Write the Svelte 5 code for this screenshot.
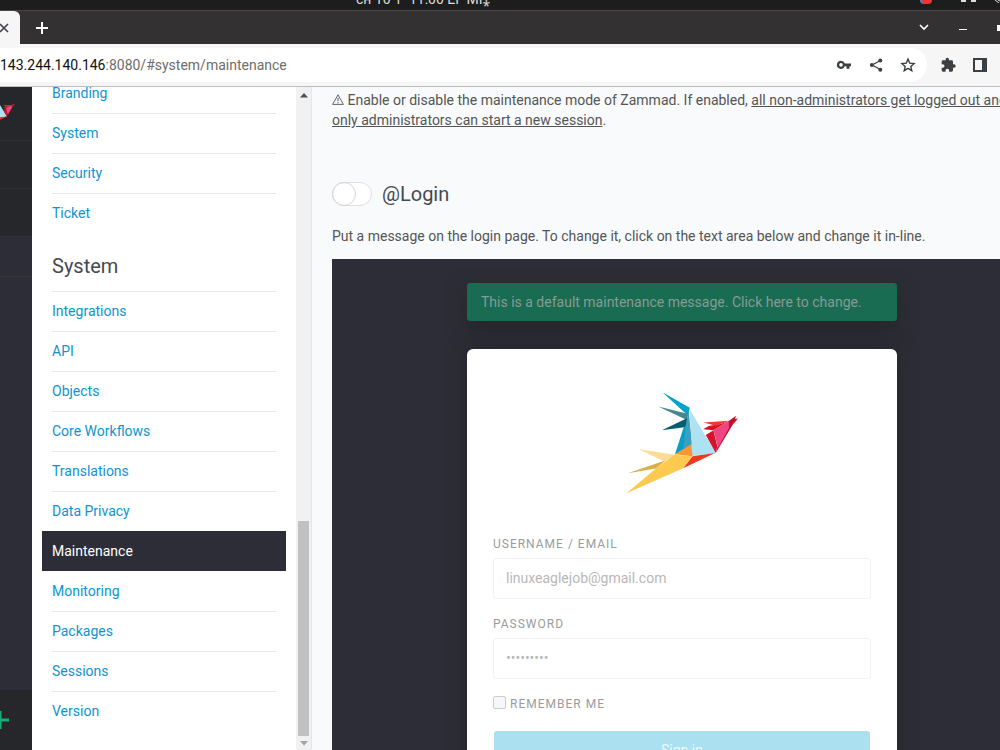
<script>
  const manage = ['Branding', 'System', 'Security', 'Ticket'];
  const system = [
    'Integrations', 'API', 'Objects', 'Core Workflows', 'Translations',
    'Data Privacy', 'Maintenance', 'Monitoring', 'Packages', 'Sessions', 'Version'
  ];
  let active = $state('Maintenance');
  let login = $state(false);
</script>

{#snippet bird(cls)}
  <svg class={cls} viewBox="78 68 334 300" aria-hidden="true">
    <polygon fill="#04a3c7" points="184,65 267,112 262,136" />
    <polygon fill="#4a8594" points="172,108 263,131 258,149" />
    <polygon fill="#045e70" points="183,180 263,141 256,170" />
    <polygon fill="#06a0c4" points="248,172 258,162 256,232 222,253" />
    <polygon fill="#3ba0bf" points="263,118 274,222 247,238 255,165" />
    <polygon fill="#aee1f2" points="265,114 345,248 274,257 271,190" />
    <polygon fill="#d5142a" points="307,177 324,167 362,160 384,152 338,180" />
    <polygon fill="#ee3b2a" points="308,156 385,151 345,166" />
    <polygon fill="#d5142a" points="315,194 338,180 350,228 345,248" />
    <polygon fill="#c4102b" points="382,153 406,136 403,146 412,144 396,163 345,248 350,230 368,195" />
    <polygon fill="#f04583" points="338,179 384,152 385,172 352,232" />
    <polygon fill="#fb9530" points="222,252 272,222 275,258" />
    <polygon fill="#ee3a22" points="275,258 343,248 247,294" />
    <polygon fill="#fcdc94" points="113,237 223,253 190,273" />
    <polygon fill="#d8b046" points="80,309 195,270 165,295" />
    <polygon fill="#fec94f" points="220,253 275,258 247,294 76,369 165,295" />
  </svg>
{/snippet}

<div class="screen">
  <div class="desktop">
    <span class="clock">сн 10 1&nbsp; 11:00 ЕГ МІ&#8270;</span>
    <span class="tray"><i class="app"></i><i class="sq"></i><i class="sq"></i><svg width="5" height="3" viewBox="0 0 5 3"><path d="M0 0l4 3M3 0l2 1" stroke="#ddd" /></svg></span>
  </div>

  <header class="tabs">
    <div class="tab">
      <button aria-label="Close tab"><svg width="10" height="10" viewBox="0 0 10 10"><path d="M1 1l8 8M9 1l-8 8" stroke="#45474a" stroke-width="1.700" /></svg></button>
    </div>
    <button class="new" aria-label="New tab"><svg width="12" height="12" viewBox="0 0 12 12"><path d="M6 0v12M0 6h12" stroke="#fff" stroke-width="2" /></svg></button>
    <div class="controls">
      <button aria-label="Search tabs"><svg width="10" height="7" viewBox="0 0 10 7"><path d="M1 1l4 4 4-4" fill="none" stroke="#fff" stroke-width="1.600" /></svg></button>
      <button aria-label="Minimize"><svg width="8" height="7" viewBox="0 0 8 7"><path d="M0 5.500h8" stroke="#fff" /></svg></button>
      <button aria-label="Maximize"><svg width="8" height="8" viewBox="0 0 8 8"><path d="M0 1h6v6H0z" fill="#fff" /></svg></button>
    </div>
  </header>

  <div class="toolbar">
    <div class="address">
      <span class="url"><b>143.244.140.146</b>:8080/#system/maintenance</span>
      <button aria-label="Passwords"><svg width="16" height="16" viewBox="0 0 16 16"><path fill="#3d4043" fill-rule="evenodd" d="M5 3.700a4.100 4.100 0 1 0 3.800 5.600h1.700v2.400h3V9.300H15V6.500H8.800A4.100 4.100 0 0 0 5 3.700zm0 2.400a1.800 1.800 0 1 1 0 3.600 1.800 1.800 0 0 1 0-3.600z" /></svg></button>
      <button aria-label="Share"><svg width="16" height="16" viewBox="0 0 16 16"><path d="M12.500 3.500L4 8l8.500 4.500" fill="none" stroke="#3d4043" stroke-width="1.300" /><g fill="#3d4043"><circle cx="12.300" cy="3.500" r="2" /><circle cx="3.800" cy="8" r="2" /><circle cx="12.300" cy="12.700" r="2" /></g></svg></button>
      <button aria-label="Bookmark"><svg width="16" height="16" viewBox="0 0 16 16"><path d="M8 2l1.700 4.100 4.400.4-3.300 2.900 1 4.300L8 11.400l-3.800 2.300 1-4.300-3.300-2.900 4.400-.4z" fill="none" stroke="#3d4043" stroke-width="1.400" /></svg></button>
    </div>
    <button aria-label="Extensions"><svg width="16" height="16" viewBox="0 0 24 24"><path fill="#3d4043" d="M21 11h-1.500V7a2 2 0 0 0-2-2h-4V3.500a2.500 2.500 0 0 0-5 0V5h-4a2 2 0 0 0-2 2v3.800H4a2.700 2.700 0 0 1 0 5.400H2.500V20a2 2 0 0 0 2 2h3.800v-1.500a2.700 2.700 0 0 1 5.400 0V22h3.800a2 2 0 0 0 2-2v-4H21a2.500 2.500 0 0 0 0-5z" /></svg></button>
    <button aria-label="Side panel"><svg width="14" height="14" viewBox="0 0 14 14"><path fill="#3d4043" fill-rule="evenodd" d="M0 0h14v14H0zM2 2v10h7V2z" /></svg></button>
  </div>

  <div class="page">
    <aside class="rail">
      <div class="brand">{@render bird('mini')}</div>
      <div class="cell"></div>
      <div class="cell"></div>
      <div class="cell recent"></div>
      <div class="fill"></div>
      <div class="foot"><button aria-label="Add"><svg width="18" height="18" viewBox="0 0 18 18"><path d="M9 0v18M0 9h18" stroke="#17ad74" stroke-width="3" /></svg></button></div>
    </aside>

    <nav class="menu">
      <ul>
        {#each manage as item}
          <li><a href="#{item}">{item}</a></li>
        {/each}
      </ul>
      <h2>System</h2>
      <ul>
        {#each system as item}
          <li class:active={item === active}><a href="#{item}" onclick={() => (active = item)}>{item}</a></li>
        {/each}
      </ul>
    </nav>

    <div class="scrollbar">
      <svg width="8" height="5" viewBox="0 0 8 5"><path d="M0 4.500L4 0l4 4.500z" fill="#505050" /></svg>
      <div class="track"><div class="thumb"></div></div>
      <svg width="8" height="5" viewBox="0 0 8 5"><path d="M0 0l4 4.500L8 0z" fill="#a3a3a3" /></svg>
    </div>

    <main>
      <p class="intro"><svg class="warn" width="12" height="11" viewBox="0 0 12 11"><path d="M6 .8L11.400 10.400H.6z" fill="none" stroke="#555" stroke-width=".9" /><path d="M6 3.800v3.400M6 8.200v1.200" stroke="#555" /></svg> Enable or disable the maintenance mode of Zammad. If enabled, <u>all non-administrators get logged out and<br />only administrators can start a new session</u>.</p>
      <div class="option">
        <label class="switch"><input type="checkbox" bind:checked={login} aria-label="@Login" /><span></span></label>
        <h2>@Login</h2>
      </div>
      <p>Put a message on the login page. To change it, click on the text area below and change it in-line.</p>
      <section class="preview">
        <div class="message"><span>This is a default maintenance message. Click here to change.</span></div>
        <form class="card" onsubmit={(e) => e.preventDefault()}>
          {@render bird('logo')}
          <label class="name" for="user">Username / email</label>
          <input class="field" id="user" type="text" value="linuxeaglejob@gmail.com" />
          <label class="name" for="pass">Password</label>
          <input class="field" id="pass" type="password" value="maintains" />
          <div class="remember"><input id="remember" type="checkbox" /><label class="name" for="remember">Remember me</label></div>
          <button class="submit">Sign in</button>
        </form>
      </section>
    </main>
  </div>
</div>

<style>
  :global(body) { margin: 0; }
  .screen, .screen * { box-sizing: border-box; }
  .screen { height: 100vh; display: flex; flex-direction: column; overflow: hidden; font: 14px/20px Roboto, "Noto Sans", sans-serif; color: #555; }
  button { border: 0; padding: 0; background: none; font: inherit; display: flex; }
  svg { flex: none; }
  h2, p, ul { margin: 0; padding: 0; }
  .desktop { flex: none; height: 10px; background: #1d1d1d; color: #ddd; display: flex; align-items: flex-end; overflow: hidden; }
  .clock { margin: 0 auto 4px 356px; line-height: 14px; font-size: 14px; }
  .tray { display: flex; gap: 5px; align-self: flex-start; }
  .tray i { width: 5px; height: 2px; background: #ddd; }
  .tray .app { width: 12px; height: 4px; margin-right: 24px; background: #ee3434; border-left: 2px solid #2d8fd5; border-radius: 0 0 4px 4px; }
  .tray svg { margin-left: 14px; }
  .tabs { flex: none; height: 34px; display: flex; align-items: center; background: #333132; border-top: 1px solid #484647; }
  .tab { width: 20px; height: 34px; display: flex; align-items: center; background: #f6f6f6; border-radius: 0 6px 0 0; }
  .tab button { margin-left: -1px; }
  .new { margin-left: 16px; }
  .controls { margin-left: auto; display: flex; align-items: center; gap: 30px; margin-right: -5px; }
  .toolbar { flex: none; height: 43px; display: flex; align-items: center; background: #f6f6f6; border-bottom: 1px solid #bdbdbd; padding-right: 13px; gap: 17px; }
  .address { flex: 1; height: 34px; display: flex; align-items: center; gap: 16px; background: #fff; border-radius: 0 17px 17px 0; padding-right: 11px; margin-right: -4px; }
  .url { flex: 1; color: #6d6d6d; white-space: nowrap; }
  .url b { font-weight: 400; color: #111; }
  .page { flex: 1; min-height: 0; display: flex; background: #f8fafc; overflow: hidden; }
  .rail { flex: none; width: 32px; display: flex; flex-direction: column; background: #2c2d36; overflow: hidden; }
  .brand { height: 54px; background: #26272b; border-bottom: 1px solid #313238; display: flex; justify-content: flex-end; padding: 8px 17px 0 0; }
  .rail :global(.mini) { width: 40px; height: 36px; }
  .cell { height: 48px; background: #26272b; border-bottom: 1px solid #313238; }
  .recent { height: 40px; background: #2c2d36; border-color: #36373d; }
  .fill { flex: 1; }
  .foot { height: 60px; background: #26272b; display: flex; align-items: center; justify-content: flex-end; padding-right: 23px; }
  .menu { flex: none; width: 264px; padding: 0 10px 19px; background: #fff; display: flex; flex-direction: column; justify-content: flex-end; overflow: hidden; }
  .menu > * { flex: none; }
  ul { list-style: none; }
  li { padding: 0 10px; }
  li a { display: block; line-height: 39px; border-top: 1px solid #e6e6e6; color: #0f94d2; text-decoration: none; }
  .active { background: #2c2d36; }
  .active a { color: #fff; border-color: transparent; }
  .active + li a { border-color: transparent; }
  h2 { font-size: 20px; font-weight: 400; line-height: 24px; color: #444a4f; }
  .menu h2 { padding: 21px 10px 13px; }
  .scrollbar { flex: none; width: 16px; display: flex; flex-direction: column; align-items: center; background: #f1f1f1; border-right: 1px solid #e6e6e6; padding: 6px 0 4px; }
  .track { flex: 1; width: 11px; display: flex; flex-direction: column; justify-content: flex-end; padding: 5px 0; }
  .thumb { height: 34%; background: #c1c1c1; }
  main { flex: 1; min-width: 0; margin-right: -32px; padding: 3px 0 0 20px; }
  .intro { white-space: nowrap; }
  .option { display: flex; align-items: center; gap: 10px; padding: 52px 0 20px; }
  .switch { position: relative; width: 40px; height: 24px; border: 1px solid #e0e0e0; border-radius: 12px; background: #fff; }
  .switch input { position: absolute; inset: 0; margin: 0; opacity: 0; }
  .switch span { display: block; width: 24px; height: 24px; margin: -1px; border: 1px solid #d5d5d5; border-radius: 12px; }
  .switch input:checked + span { margin-left: 15px; }
  .preview { display: flex; flex-direction: column; align-items: center; gap: 28px; margin-top: 13px; padding-top: 24px; background: #2c2d36; }
  .message { width: 430px; max-width: 100%; padding: 9px 14px; background: #196b51; color: #869c94; border-radius: 3px; box-shadow: 0 8px 20px #2228; }
  .card { width: 430px; max-width: 100%; padding: 44px 26px; background: #fff; border-radius: 6px; box-shadow: 0 0 20px #2228; display: flex; flex-direction: column; }
  .card :global(.logo) { width: 111px; height: 100px; align-self: center; margin-bottom: 41px; }
  .name { font-size: 12px; letter-spacing: 1px; text-transform: uppercase; color: #999c9e; }
  .field { height: 41px; margin: 4px 0 15px; padding: 0 12px 1px; border: 1px solid #f2f2f2; border-radius: 3px; font: inherit; color: #b8b8b8; background: #fff; }
  .remember { display: flex; align-items: center; gap: 4px; }
  .remember input { appearance: none; width: 13px; height: 13px; margin: 0 0 4px; border: 1px solid #ccc; border-radius: 2px; background: #f7f7f7; }
  .submit { height: 38px; margin: 17px 1px 0; justify-content: center; align-items: center; background: #aae0f0; color: #eefaff; border-radius: 3px; }
</style>
